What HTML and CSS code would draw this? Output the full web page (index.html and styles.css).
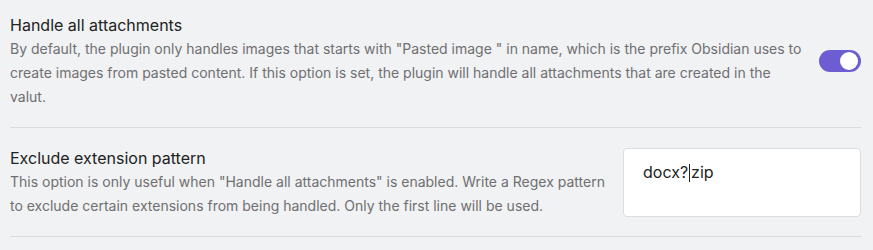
FILE: index.html
```html
<!DOCTYPE html>
<html>
<head>
<meta charset="utf-8">
<link rel="stylesheet" href="styles.css">
</head>
<body>
<div class="settings">
  <div class="setting-item first">
    <div class="setting-info">
      <div class="setting-name">Handle all attachments</div>
      <div class="setting-desc">By default, the plugin only handles images that starts with "Pasted image " in name, which is the prefix Obsidian uses to create images from pasted content. If this option is set, the plugin will handle all attachments that are created in the valut.</div>
    </div>
    <div class="setting-control">
      <div class="toggle"><div class="knob"></div></div>
    </div>
  </div>
  <div class="setting-item">
    <div class="setting-info">
      <div class="setting-name">Exclude extension pattern</div>
      <div class="setting-desc">This option is only useful when "Handle all attachments" is enabled. Write a Regex pattern to exclude certain extensions from being handled. Only the first line will be used.</div>
    </div>
    <div class="setting-control">
      <div class="textarea">docx?<span class="caret"></span>zip</div>
    </div>
  </div>
</div>
</body>
</html>
```
FILE: styles.css
```css
html, body {
  margin: 0;
  padding: 0;
  background: #f1f2f4;
}
body {
  font-family: "Inter", "Liberation Sans", sans-serif;
  width: 873px;
  height: 250px;
  overflow: hidden;
}
.settings {
  margin: 0 12px 0 10px;
}
.setting-item {
  display: flex;
  align-items: center;
  gap: 16px;
  padding: 18px 0;
  border-bottom: 1px solid #dadbdd;
}
.setting-item.first {
  padding-top: 13px;
}
.setting-info {
  flex: 1 1 auto;
  min-width: 0;
}
.setting-name {
  font-size: 16px;
  line-height: 24px;
  color: #222222;
}
.setting-desc {
  font-size: 14px;
  line-height: 24px;
  color: #6f6f71;
}
.setting-control {
  flex: 0 0 auto;
  display: flex;
  align-items: center;
}
.toggle {
  width: 42px;
  height: 22px;
  border-radius: 11px;
  background: #6c5dd3;
  position: relative;
}
.knob {
  position: absolute;
  top: 2px;
  right: 3px;
  width: 18px;
  height: 18px;
  border-radius: 50%;
  background: #ffffff;
}
.textarea {
  box-sizing: border-box;
  width: 238px;
  height: 69px;
  background: #ffffff;
  border: 1px solid #dcdde0;
  border-radius: 4px;
  padding: 11px 19px;
  font-size: 16px;
  line-height: 24px;
  color: #222222;
}
.caret {
  display: inline-block;
  width: 1px;
  height: 18px;
  background: #222222;
  vertical-align: -4px;
  margin: 0 1px;
}
```
